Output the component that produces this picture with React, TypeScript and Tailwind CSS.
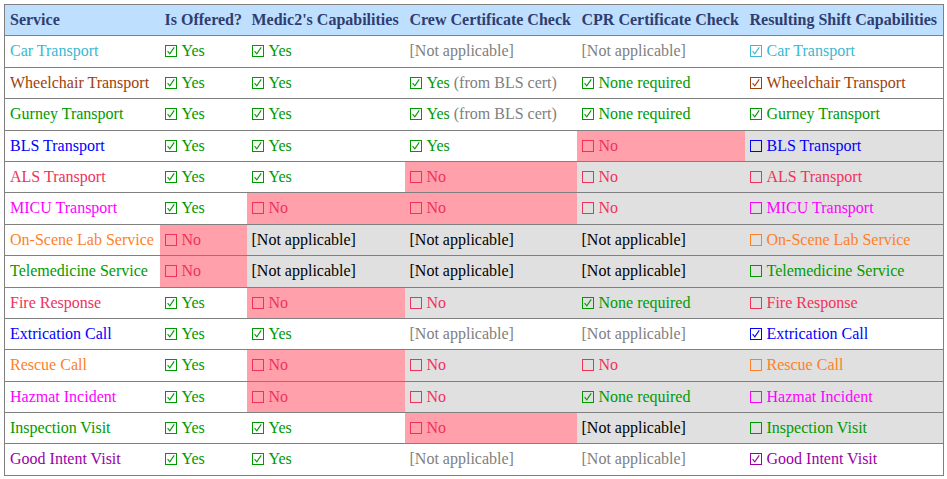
import React from "react";

type Bg = "w" | "p" | "g";
type Kind = "yes" | "no" | "na" | "none" | "yesbls";
type Cell = [Kind, Bg];

const GREEN = "#009a00";
const RED = "#f0325a";
const GRAY = "#808080";

function Box({ checked, color }: { checked: boolean; color: string }) {
  return (
    <svg
      width="12"
      height="12"
      viewBox="0 0 12 12"
      className="inline-block mr-[5px] align-[-1px]"
      fill="none"
    >
      <rect x="0.5" y="0.5" width="11" height="11" stroke={color} strokeWidth="1" />
      {checked && (
        <path d="M2.6 6.2 L4.8 8.8 L9.2 2.4" stroke={color} strokeWidth="1.1" />
      )}
    </svg>
  );
}

const bgClass: Record<Bg, string> = {
  w: "bg-white",
  p: "bg-[#ffa0aa]",
  g: "bg-[#e0e0e0]",
};

function Content({ cell }: { cell: Cell }) {
  const [kind, bg] = cell;
  if (kind === "yes")
    return (
      <span style={{ color: GREEN }}>
        <Box checked color={GREEN} />
        Yes
      </span>
    );
  if (kind === "yesbls")
    return (
      <span style={{ color: GREEN }}>
        <Box checked color={GREEN} />
        Yes <span className="text-[#808080]">(from BLS cert)</span>
      </span>
    );
  if (kind === "none")
    return (
      <span style={{ color: GREEN }}>
        <Box checked color={GREEN} />
        None required
      </span>
    );
  if (kind === "no")
    return (
      <span style={{ color: RED }}>
        <Box checked={false} color={RED} />
        No
      </span>
    );
  return <span style={{ color: bg === "w" ? GRAY : "#000000" }}>[Not applicable]</span>;
}

type Row = { name: string; color: string; cells: Cell[]; ok: boolean };

const rows: Row[] = [
  { name: "Car Transport", color: "#3ab8d4", cells: [["yes", "w"], ["yes", "w"], ["na", "w"], ["na", "w"]], ok: true },
  { name: "Wheelchair Transport", color: "#a0400a", cells: [["yes", "w"], ["yes", "w"], ["yesbls", "w"], ["none", "w"]], ok: true },
  { name: "Gurney Transport", color: "#009a00", cells: [["yes", "w"], ["yes", "w"], ["yesbls", "w"], ["none", "w"]], ok: true },
  { name: "BLS Transport", color: "#0000ff", cells: [["yes", "w"], ["yes", "w"], ["yes", "w"], ["no", "p"]], ok: false },
  { name: "ALS Transport", color: RED, cells: [["yes", "w"], ["yes", "w"], ["no", "p"], ["no", "g"]], ok: false },
  { name: "MICU Transport", color: "#ff00ff", cells: [["yes", "w"], ["no", "p"], ["no", "p"], ["no", "g"]], ok: false },
  { name: "On-Scene Lab Service", color: "#ff7f27", cells: [["no", "p"], ["na", "g"], ["na", "g"], ["na", "g"]], ok: false },
  { name: "Telemedicine Service", color: "#009a00", cells: [["no", "p"], ["na", "g"], ["na", "g"], ["na", "g"]], ok: false },
  { name: "Fire Response", color: RED, cells: [["yes", "w"], ["no", "p"], ["no", "g"], ["none", "g"]], ok: false },
  { name: "Extrication Call", color: "#0000ff", cells: [["yes", "w"], ["yes", "w"], ["na", "w"], ["na", "w"]], ok: true },
  { name: "Rescue Call", color: "#ff7f27", cells: [["yes", "w"], ["no", "p"], ["no", "g"], ["no", "g"]], ok: false },
  { name: "Hazmat Incident", color: "#ff00ff", cells: [["yes", "w"], ["no", "p"], ["no", "g"], ["none", "g"]], ok: false },
  { name: "Inspection Visit", color: "#009a00", cells: [["yes", "w"], ["yes", "w"], ["no", "p"], ["na", "g"]], ok: false },
  { name: "Good Intent Visit", color: "#9a00a8", cells: [["yes", "w"], ["yes", "w"], ["na", "w"], ["na", "w"]], ok: true },
];

const headers = [
  "Service",
  "Is Offered?",
  "Medic2's Capabilities",
  "Crew Certificate Check",
  "CPR Certificate Check",
  "Resulting Shift Capabilities",
];

export default function App() {
  return (
    <div
      className="bg-white w-[947px] h-[479px] pl-[4px] pt-[4px] text-[16px] leading-[1.15]"
      style={{ fontFamily: '"Liberation Serif", "Times New Roman", serif' }}
    >
      <table className="table-fixed border-collapse w-[939px] border border-[#808080]">
        <colgroup>
          <col className="w-[155px]" />
          <col className="w-[87px]" />
          <col className="w-[158px]" />
          <col className="w-[172px]" />
          <col className="w-[168px]" />
          <col className="w-[199px]" />
        </colgroup>
        <thead>
          <tr className="bg-[#bfdfff] border-b border-[#808080]">
            {headers.map((h) => (
              <th
                key={h}
                className="text-left font-bold text-[#2f3d6f] px-[5px] py-[6px] whitespace-nowrap"
              >
                {h}
              </th>
            ))}
          </tr>
        </thead>
        <tbody>
          {rows.map((r) => (
            <tr key={r.name} className="border-b border-[#808080]">
              <td className="bg-white px-[5px] py-[6px] whitespace-nowrap" style={{ color: r.color }}>
                {r.name}
              </td>
              {r.cells.map((c, i) => (
                <td key={i} className={`${bgClass[c[1]]} px-[5px] py-[6px] whitespace-nowrap`}>
                  <Content cell={c} />
                </td>
              ))}
              <td
                className={`${r.ok ? "bg-white" : "bg-[#e0e0e0]"} px-[5px] py-[6px] whitespace-nowrap`}
                style={{ color: r.color }}
              >
                <Box checked={r.ok} color={r.color} />
                {r.name}
              </td>
            </tr>
          ))}
        </tbody>
      </table>
    </div>
  );
}
